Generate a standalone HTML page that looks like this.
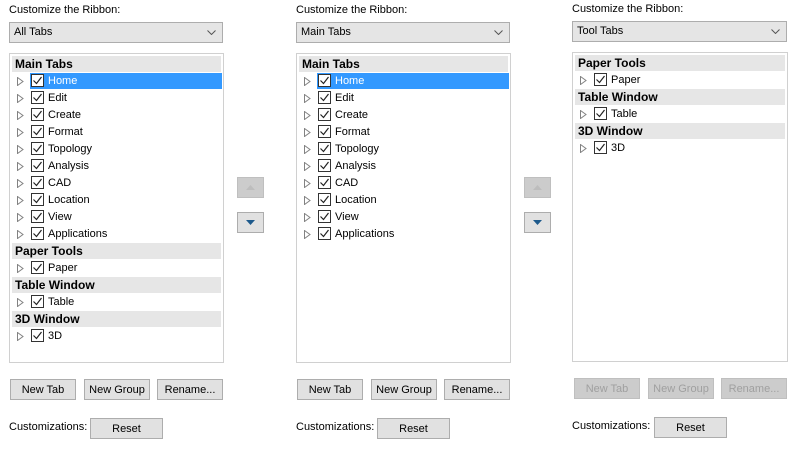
<!DOCTYPE html><html><head><style>
body{margin:0;width:797px;height:450px;background:#fff;position:relative;overflow:hidden;font-family:"Liberation Sans",sans-serif;font-size:11px;color:#000}
.lbl{position:absolute;font-size:11px;white-space:nowrap}
.combo{position:absolute;height:19px;background:#e5e5e5;border:1px solid #adadad;line-height:19px;box-sizing:content-box}
.combo span{position:absolute;left:4px}
.combo svg{position:absolute;right:6px;top:7px}
.list{position:absolute;border:1px solid #d0d0d0;background:#fff;box-sizing:border-box}
.hd{position:absolute;left:2px;right:2px;height:16px;background:#e6e6e6;font-weight:bold;font-size:12px;line-height:16px;padding-left:3px}
.r{position:absolute;left:0;right:0;height:17px;line-height:19px}
.r .t{position:absolute;left:7px;top:5px}
.r .c{position:absolute;left:21px;top:2px;width:13px;height:13px;border:1px solid #333;box-sizing:border-box;background:#fff}
.r .c svg{position:absolute;left:1px;top:1px}
.r .x{position:absolute;left:35px;padding:0 3px;top:0}
.r.sel .hl{position:absolute;left:20px;right:1px;top:1px;height:16px;background:#3399ff}
.r.sel .x{color:#fff}
.btn{position:absolute;height:19px;background:#e1e1e1;border:1px solid #adadad;text-align:center;line-height:20px;font-size:11px;white-space:nowrap}
.dis{color:#8c8c8c;border-color:#bfbfbf;background:#ccc}
.dis2{color:#a0a0a0;border-color:#bfbfbf;background:#cccccc}
</style></head><body>
<svg width="0" height="0" style="position:absolute"><defs>
<symbol id="tri" viewBox="0 0 7 9"><path d="M0.5 0.5 L6 4.5 L0.5 8.5 Z" fill="none" stroke="#828282"/></symbol>
<symbol id="chk" viewBox="0 0 9 9"><path d="M0.5 4.5 L3.5 7.5 L8.5 1" fill="none" stroke="#222" stroke-width="1.2"/></symbol>
<symbol id="dn" viewBox="0 0 9 5"><path d="M0.5 0.5 L4.5 4.5 L8.5 0.5" fill="none" stroke="#555"/></symbol>
</defs></svg>

<!-- Panel 1 -->
<div class="lbl" style="left:9px;top:4px">Customize the Ribbon:</div>
<div class="combo" style="left:9px;top:22px;width:212px"><span>All Tabs</span><svg width="9" height="5"><use href="#dn"/></svg></div>
<div class="list" style="left:9px;top:53px;width:215px;height:310px">
<div class="hd" style="top:2px">Main Tabs</div>
<div class="r sel" style="top:18px"><div class="hl"></div><svg class="t" width="7" height="9"><use href="#tri"/></svg><div class="c"><svg width="9" height="9"><use href="#chk"/></svg></div><span class="x">Home</span></div>
<div class="r" style="top:35px"><svg class="t" width="7" height="9"><use href="#tri"/></svg><div class="c"><svg width="9" height="9"><use href="#chk"/></svg></div><span class="x">Edit</span></div>
<div class="r" style="top:52px"><svg class="t" width="7" height="9"><use href="#tri"/></svg><div class="c"><svg width="9" height="9"><use href="#chk"/></svg></div><span class="x">Create</span></div>
<div class="r" style="top:69px"><svg class="t" width="7" height="9"><use href="#tri"/></svg><div class="c"><svg width="9" height="9"><use href="#chk"/></svg></div><span class="x">Format</span></div>
<div class="r" style="top:86px"><svg class="t" width="7" height="9"><use href="#tri"/></svg><div class="c"><svg width="9" height="9"><use href="#chk"/></svg></div><span class="x">Topology</span></div>
<div class="r" style="top:103px"><svg class="t" width="7" height="9"><use href="#tri"/></svg><div class="c"><svg width="9" height="9"><use href="#chk"/></svg></div><span class="x">Analysis</span></div>
<div class="r" style="top:120px"><svg class="t" width="7" height="9"><use href="#tri"/></svg><div class="c"><svg width="9" height="9"><use href="#chk"/></svg></div><span class="x">CAD</span></div>
<div class="r" style="top:137px"><svg class="t" width="7" height="9"><use href="#tri"/></svg><div class="c"><svg width="9" height="9"><use href="#chk"/></svg></div><span class="x">Location</span></div>
<div class="r" style="top:154px"><svg class="t" width="7" height="9"><use href="#tri"/></svg><div class="c"><svg width="9" height="9"><use href="#chk"/></svg></div><span class="x">View</span></div>
<div class="r" style="top:171px"><svg class="t" width="7" height="9"><use href="#tri"/></svg><div class="c"><svg width="9" height="9"><use href="#chk"/></svg></div><span class="x">Applications</span></div>
<div class="hd" style="top:189px">Paper Tools</div>
<div class="r" style="top:205px"><svg class="t" width="7" height="9"><use href="#tri"/></svg><div class="c"><svg width="9" height="9"><use href="#chk"/></svg></div><span class="x">Paper</span></div>
<div class="hd" style="top:223px">Table Window</div>
<div class="r" style="top:239px"><svg class="t" width="7" height="9"><use href="#tri"/></svg><div class="c"><svg width="9" height="9"><use href="#chk"/></svg></div><span class="x">Table</span></div>
<div class="hd" style="top:257px">3D Window</div>
<div class="r" style="top:273px"><svg class="t" width="7" height="9"><use href="#tri"/></svg><div class="c"><svg width="9" height="9"><use href="#chk"/></svg></div><span class="x">3D</span></div>
</div>
<div class="btn" style="left:10px;top:379px;width:64px">New Tab</div>
<div class="btn" style="left:84px;top:379px;width:64px">New Group</div>
<div class="btn" style="left:157px;top:379px;width:64px">Rename...</div>
<div class="lbl" style="left:9px;top:421px">Customizations:</div>
<div class="btn" style="left:90px;top:418px;width:71px">Reset</div>

<div class="btn dis" style="left:237px;top:177px;width:25px;height:19px"><svg width="9" height="5" style="position:absolute;left:8px;top:7px"><path d="M0 5 L4.5 0 L9 5Z" fill="#bdbdbd"/></svg></div>
<div class="btn" style="left:237px;top:212px;width:25px;height:19px"><svg width="9" height="5" style="position:absolute;left:8px;top:7px"><path d="M0 0 L4.5 5 L9 0Z" fill="#1e5a8c"/></svg></div>

<!-- Panel 2 -->
<div class="lbl" style="left:296px;top:4px">Customize the Ribbon:</div>
<div class="combo" style="left:296px;top:22px;width:212px"><span>Main Tabs</span><svg width="9" height="5"><use href="#dn"/></svg></div>
<div class="list" style="left:296px;top:53px;width:215px;height:310px">
<div class="hd" style="top:2px">Main Tabs</div>
<div class="r sel" style="top:18px"><div class="hl"></div><svg class="t" width="7" height="9"><use href="#tri"/></svg><div class="c"><svg width="9" height="9"><use href="#chk"/></svg></div><span class="x">Home</span></div>
<div class="r" style="top:35px"><svg class="t" width="7" height="9"><use href="#tri"/></svg><div class="c"><svg width="9" height="9"><use href="#chk"/></svg></div><span class="x">Edit</span></div>
<div class="r" style="top:52px"><svg class="t" width="7" height="9"><use href="#tri"/></svg><div class="c"><svg width="9" height="9"><use href="#chk"/></svg></div><span class="x">Create</span></div>
<div class="r" style="top:69px"><svg class="t" width="7" height="9"><use href="#tri"/></svg><div class="c"><svg width="9" height="9"><use href="#chk"/></svg></div><span class="x">Format</span></div>
<div class="r" style="top:86px"><svg class="t" width="7" height="9"><use href="#tri"/></svg><div class="c"><svg width="9" height="9"><use href="#chk"/></svg></div><span class="x">Topology</span></div>
<div class="r" style="top:103px"><svg class="t" width="7" height="9"><use href="#tri"/></svg><div class="c"><svg width="9" height="9"><use href="#chk"/></svg></div><span class="x">Analysis</span></div>
<div class="r" style="top:120px"><svg class="t" width="7" height="9"><use href="#tri"/></svg><div class="c"><svg width="9" height="9"><use href="#chk"/></svg></div><span class="x">CAD</span></div>
<div class="r" style="top:137px"><svg class="t" width="7" height="9"><use href="#tri"/></svg><div class="c"><svg width="9" height="9"><use href="#chk"/></svg></div><span class="x">Location</span></div>
<div class="r" style="top:154px"><svg class="t" width="7" height="9"><use href="#tri"/></svg><div class="c"><svg width="9" height="9"><use href="#chk"/></svg></div><span class="x">View</span></div>
<div class="r" style="top:171px"><svg class="t" width="7" height="9"><use href="#tri"/></svg><div class="c"><svg width="9" height="9"><use href="#chk"/></svg></div><span class="x">Applications</span></div>
</div>
<div class="btn" style="left:297px;top:379px;width:64px">New Tab</div>
<div class="btn" style="left:371px;top:379px;width:64px">New Group</div>
<div class="btn" style="left:444px;top:379px;width:64px">Rename...</div>
<div class="lbl" style="left:296px;top:421px">Customizations:</div>
<div class="btn" style="left:377px;top:418px;width:71px">Reset</div>

<div class="btn dis" style="left:524px;top:177px;width:25px;height:19px"><svg width="9" height="5" style="position:absolute;left:8px;top:7px"><path d="M0 5 L4.5 0 L9 5Z" fill="#bdbdbd"/></svg></div>
<div class="btn" style="left:524px;top:212px;width:25px;height:19px"><svg width="9" height="5" style="position:absolute;left:8px;top:7px"><path d="M0 0 L4.5 5 L9 0Z" fill="#1e5a8c"/></svg></div>

<!-- Panel 3 -->
<div class="lbl" style="left:572px;top:3px">Customize the Ribbon:</div>
<div class="combo" style="left:572px;top:21px;width:213px"><span>Tool Tabs</span><svg width="9" height="5"><use href="#dn"/></svg></div>
<div class="list" style="left:572px;top:52px;width:216px;height:310px">
<div class="hd" style="top:2px">Paper Tools</div>
<div class="r" style="top:18px"><svg class="t" width="7" height="9"><use href="#tri"/></svg><div class="c"><svg width="9" height="9"><use href="#chk"/></svg></div><span class="x">Paper</span></div>
<div class="hd" style="top:36px">Table Window</div>
<div class="r" style="top:52px"><svg class="t" width="7" height="9"><use href="#tri"/></svg><div class="c"><svg width="9" height="9"><use href="#chk"/></svg></div><span class="x">Table</span></div>
<div class="hd" style="top:70px">3D Window</div>
<div class="r" style="top:86px"><svg class="t" width="7" height="9"><use href="#tri"/></svg><div class="c"><svg width="9" height="9"><use href="#chk"/></svg></div><span class="x">3D</span></div>
</div>
<div class="btn dis2" style="left:574px;top:378px;width:64px">New Tab</div>
<div class="btn dis2" style="left:648px;top:378px;width:64px">New Group</div>
<div class="btn dis2" style="left:721px;top:378px;width:64px">Rename...</div>
<div class="lbl" style="left:572px;top:420px">Customizations:</div>
<div class="btn" style="left:654px;top:417px;width:71px">Reset</div>
</body></html>
